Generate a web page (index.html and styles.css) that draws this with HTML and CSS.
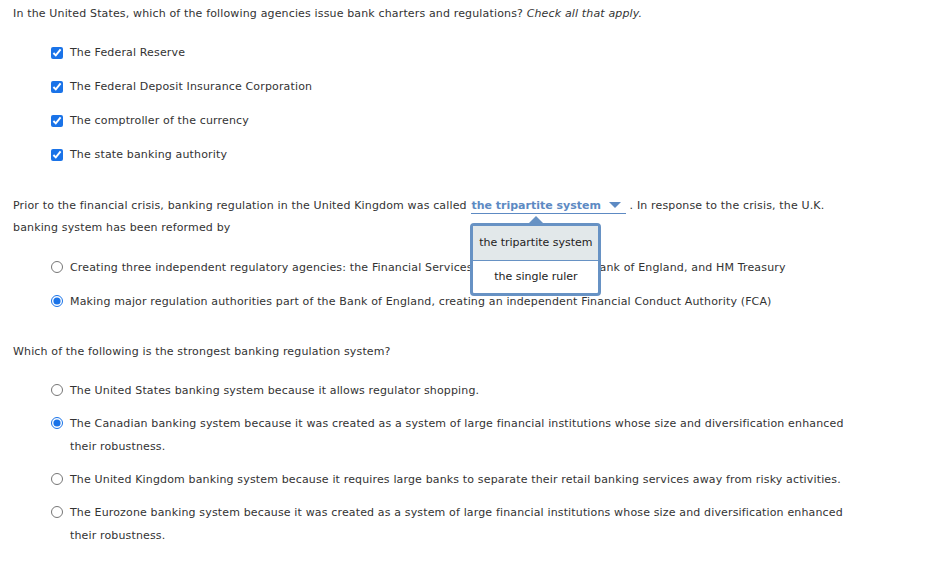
FILE: index.html
```html
<!DOCTYPE html>
<html lang="en">
<head>
<meta charset="utf-8">
<title>Banking regulation</title>
<link rel="stylesheet" href="styles.css">
</head>
<body>
<main class="page">
  <section class="question">
    <p class="prompt prompt-first">In the United States, which of the following agencies issue bank charters and regulations? <em>Check all that apply.</em></p>
    <ul class="options options-check">
      <li class="option"><input type="checkbox" checked><span>The Federal Reserve</span></li>
      <li class="option"><input type="checkbox" checked><span>The Federal Deposit Insurance Corporation</span></li>
      <li class="option"><input type="checkbox" checked><span>The comptroller of the currency</span></li>
      <li class="option"><input type="checkbox" checked><span>The state banking authority</span></li>
    </ul>
  </section>

  <section class="question q2">
    <p class="prompt">Prior to the financial crisis, banking regulation in the United Kingdom was called <span class="dropdown"><span class="dropdown-value">the tripartite system</span><span class="dropdown-arrow"></span><span class="popup"><span class="popup-item active">the tripartite system</span><span class="popup-item">the single ruler</span></span></span> . In response to the crisis, the U.K. banking system has been reformed by</p>
    <ul class="options">
      <li class="option"><input type="radio" name="q2"><span>Creating three independent regulatory agencies: the Financial Services Authority (FSA), the Bank of England, and HM Treasury</span></li>
      <li class="option"><input type="radio" name="q2" checked><span>Making major regulation authorities part of the Bank of England, creating an independent Financial Conduct Authority (FCA)</span></li>
    </ul>
  </section>

  <section class="question q3">
    <p class="prompt">Which of the following is the strongest banking regulation system?</p>
    <ul class="options">
      <li class="option"><input type="radio" name="q3"><span>The United States banking system because it allows regulator shopping.</span></li>
      <li class="option"><input type="radio" name="q3" checked><span>The Canadian banking system because it was created as a system of large financial institutions whose size and diversification enhanced their robustness.</span></li>
      <li class="option"><input type="radio" name="q3"><span>The United Kingdom banking system because it requires large banks to separate their retail banking services away from risky activities.</span></li>
      <li class="option"><input type="radio" name="q3"><span>The Eurozone banking system because it was created as a system of large financial institutions whose size and diversification enhanced their robustness.</span></li>
    </ul>
  </section>
</main>
</body>
</html>
```

FILE: styles.css
```css
* { box-sizing: border-box; }
html, body { margin: 0; padding: 0; background: #fff; }
body {
  font-family: "DejaVu Sans", Verdana, sans-serif;
  font-size: 11px;
  letter-spacing: 0.15px;
  color: #333;
}
.page {
  padding: 3px 0 0 13px;
  width: 848px;
}
.prompt {
  margin: 0;
  line-height: 22px;
}
.options {
  list-style: none;
  margin: 0;
  padding: 0 0 0 38px;
}
.options-check { padding-top: 17px; }
.option {
  display: flex;
  align-items: flex-start;
  line-height: 23px;
  margin-bottom: 10px;
}
.options-check .option {
  line-height: 22px;
  margin-bottom: 12px;
}
.q2 .option { margin-bottom: 11px; }
.option input {
  margin: 5px 7px 0 0;
  width: 12px;
  height: 12px;
  flex: none;
  accent-color: #1a73e8;
}
.q2 { margin-top: 29px; }
.q2 .options { padding-top: 17px; }
.q3 { margin-top: 28px; }
.q3 .options { padding-top: 16px; }

.dropdown {
  position: relative;
  display: inline-block;
  border-bottom: 1px solid #5d8ac3;
  line-height: 15px;
  padding: 0 5px 0 0;
  margin-left: 1px;
}
.dropdown-value {
  color: #5d8ac3;
  font-weight: bold;
  letter-spacing: 0;
}
.dropdown-arrow {
  display: inline-block;
  width: 0;
  height: 0;
  margin-left: 8px;
  border-left: 6px solid transparent;
  border-right: 6px solid transparent;
  border-top: 6px solid #5d8ac3;
  vertical-align: 1px;
}
.popup {
  position: absolute;
  left: -1px;
  top: 25px;
  width: 131px;
  border: 3px solid #6792c4;
  border-radius: 4px;
  background: #fff;
  display: flex;
  flex-direction: column;
  z-index: 2;
}
.popup::before {
  content: "";
  position: absolute;
  top: -10px;
  left: 56px;
  border-left: 7px solid transparent;
  border-right: 7px solid transparent;
  border-bottom: 7px solid #6792c4;
}
.popup-item {
  height: 32px;
  line-height: 32px;
  text-align: center;
  color: #222;
  font-weight: normal;
  letter-spacing: 0;
}
.popup-item.active {
  background: #e2e8ea;
  border-bottom: 1px solid #6792c4;
  height: 35px;
  line-height: 34px;
}
```
